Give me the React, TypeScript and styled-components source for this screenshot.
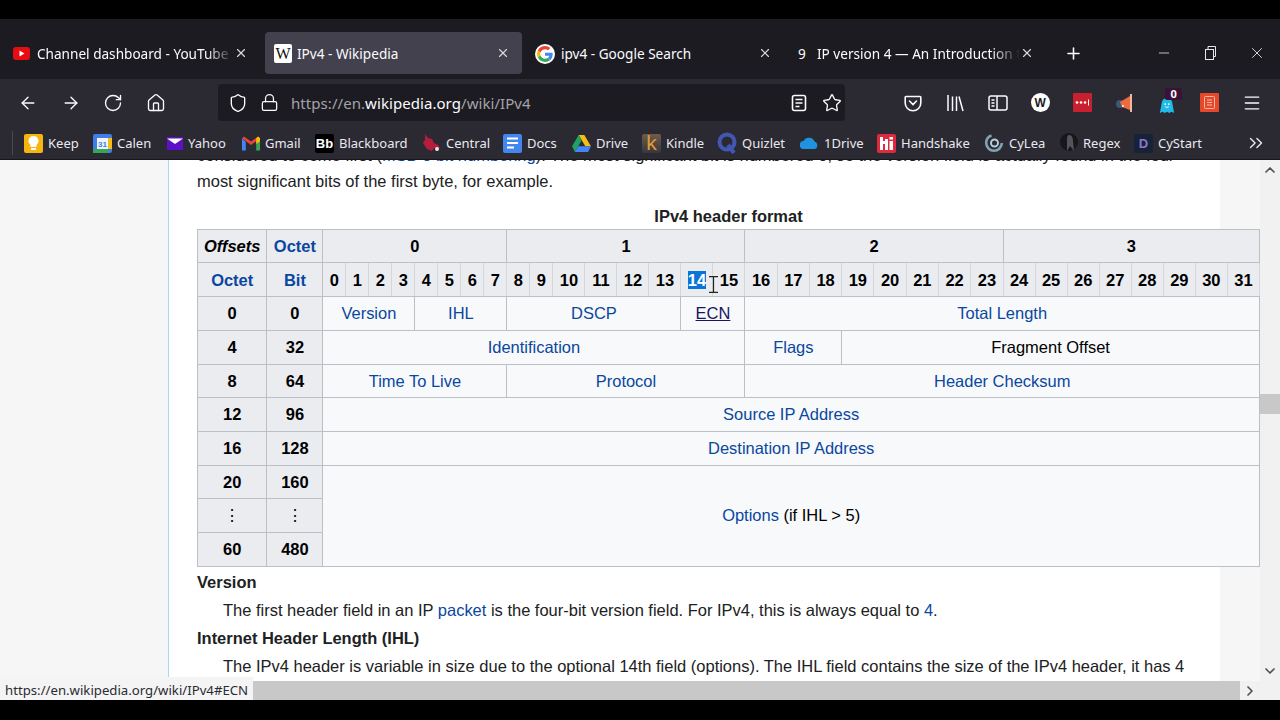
import React from 'react';
import styled, { createGlobalStyle } from 'styled-components';
import { ArrowLeft, ArrowRight, ChevronDown, ChevronRight, ChevronUp, ChevronsRight, Home, Lock, Menu, Minus, Plus, RotateCw, Shield, Star, X } from 'lucide-react';

const GlobalStyle = createGlobalStyle`
    html, body {
        margin: 0;
        padding: 0;
        background: #000;
    }
`;

const Screen = styled.div`
    width: 1280px;
    height: 720px;
    overflow: hidden;
    display: flex;
    flex-direction: column;
    background: #000;
    font-family: "Noto Sans", sans-serif;
`;

const BlackBand = styled.div<{ $h: number }>`
    height: ${p => p.$h}px;
    flex: none;
    background: #000;
`;

const TabBar = styled.div`
    height: 60px;
    flex: none;
    display: flex;
    align-items: center;
    padding: 8px 0 0 3px;
    box-sizing: border-box;
    background: #1c1b22;
    color: #fbfbfe;
`;

const TabStrip = styled.div`
    display: flex;
    gap: 5px;
`;

const Tab = styled.div<{ $active?: boolean }>`
    width: 257px;
    height: 42px;
    box-sizing: border-box;
    padding: 1px 12px 0 9px;
    display: flex;
    align-items: center;
    gap: 5px;
    border-radius: 4px;
    font-size: 13.6px;
    background: ${p => (p.$active ? '#42414d' : 'transparent')};
`;

const TabLabel = styled.span<{ $fade?: boolean }>`
    flex: 1;
    min-width: 0;
    white-space: nowrap;
    overflow: hidden;
    ${p => p.$fade && 'mask-image: linear-gradient(to right, #000 86%, transparent 100%);'}
`;

const TabNumber = styled.span`
    width: 14px;
`;

const TabClose = styled.span`
    display: flex;
    margin: -1px 0 0 -5px;
    color: #d8d8dc;
`;

const NewTab = styled.span`
    display: flex;
    margin-left: 18px;
`;

const WindowControls = styled.div`
    margin-left: auto;
    display: flex;
    align-items: center;
    gap: 30px;
    padding-right: 14px;
    color: #e8e8ea;
`;

const NavBar = styled.div`
    height: 46px;
    flex: none;
    box-sizing: border-box;
    padding-top: 1px;
    display: flex;
    align-items: center;
    background: #2b2a33;
    color: #fbfbfe;
`;

const NavButtons = styled.div`
    width: 218px;
    flex: none;
    box-sizing: border-box;
    padding-left: 18px;
    display: flex;
    gap: 22.5px;
`;

const UrlBar = styled.div`
    width: 627px;
    height: 37px;
    flex: none;
    box-sizing: border-box;
    padding: 0 1px 0 10px;
    display: flex;
    align-items: center;
    border-radius: 4px;
    background: #1c1b22;
`;

const UrlIcon = styled.span<{ $gap: number }>`
    display: flex;
    margin-right: ${p => p.$gap}px;
`;

const UrlText = styled.span`
    flex: 1;
    font-size: 15px;
    letter-spacing: 0.06px;
    color: #a4a3ab;
`;

const UrlHost = styled.span`
    color: #fbfbfe;
`;

const NavExtensions = styled.div`
    flex: 1;
    display: flex;
    align-items: center;
    gap: 18.38px;
    padding-left: 56px;
`;

const Extension = styled.span`
    position: relative;
    width: 24px;
    height: 24px;
    display: flex;
    align-items: center;
    justify-content: center;
`;

const GhostBadge = styled.span`
    position: absolute;
    top: -3px;
    right: -3px;
    width: 17px;
    height: 12px;
    border-radius: 2px;
    font-size: 11px;
    font-weight: 700;
    line-height: 12px;
    text-align: center;
    color: #fff;
    background: #3a1237;
`;

const BadgeW = styled.span`
    width: 19px;
    height: 19px;
    border-radius: 50%;
    display: flex;
    align-items: center;
    justify-content: center;
    font: 700 12px "Liberation Sans", sans-serif;
    color: #1c1b22;
    background: #fff;
`;

const BookmarkBar = styled.div`
    height: 35px;
    flex: none;
    display: flex;
    align-items: center;
    box-sizing: border-box;
    padding: 1px 13px 0 12px;
    background: #2b2a33;
    color: #e9e9ee;
    box-shadow: inset 0 -1px 0 #17161b;
`;

const BookmarkSeparator = styled.span`
    width: 1px;
    height: 24px;
    margin-right: 11px;
    background: #4a4953;
`;

const Bookmark = styled.span<{ $w: number }>`
    flex: none;
    width: ${p => p.$w}px;
    display: flex;
    align-items: center;
    gap: 5px;
    font-size: 13px;
    white-space: nowrap;
`;

const IconTile = styled.span<{ $bg: string; $fg?: string }>`
    width: 19px;
    height: 19px;
    flex: none;
    border-radius: 2px;
    display: flex;
    align-items: center;
    justify-content: center;
    font: 700 13px "Liberation Sans", sans-serif;
    color: ${p => p.$fg || '#fff'};
    background: ${p => p.$bg};
`;

const KindleTile = styled(IconTile)`
    font: 400 21px "Liberation Sans", sans-serif;
`;

const BookmarkOverflow = styled.span`
    margin-left: auto;
    display: flex;
`;

const Viewport = styled.div`
    flex: 1;
    min-height: 0;
    display: flex;
    overflow: hidden;
    position: relative;
    background: #f6f6f6;
    font-family: "Liberation Sans", Arial, sans-serif;
    font-size: 16.48px;
    line-height: 25.6px;
    color: #202122;
`;

const PageArea = styled.div`
    flex: 1;
    min-width: 0;
    padding-left: 168px;
`;

const Article = styled.div`
    display: flow-root;
    width: 1052px;
    height: 100%;
    box-sizing: border-box;
    padding: 0 0 0 28px;
    border-left: 1px solid #a7d7f9;
    background: #fff;
    white-space: nowrap;
`;

const Para = styled.p`
    margin: -17px 0 0;
`;

const Link = styled.a<{ $visited?: boolean }>`
    color: ${p => (p.$visited ? '#1b1464' : '#0a479f')};
    text-decoration: ${p => (p.$visited ? 'underline' : 'none')};
`;

const Caption = styled.div`
    width: 1063px;
    margin-top: 10px;
    margin-bottom: -1px;
    font-weight: 700;
    text-align: center;
`;

const HeaderTable = styled.table`
    width: 1062px;
    table-layout: fixed;
    border-collapse: collapse;
    color: #000;
    background: #f8f9fa;
`;

const Col = styled.col<{ $w: number }>`
    width: ${p => p.$w}px;
`;

const Row = styled.tr`
    height: 33.7px;
`;

const Head = styled.th<{ $italic?: boolean }>`
    padding: 1px 0 0;
    border: 1px solid #bcc0c5;
    font-weight: 700;
    font-style: ${p => (p.$italic ? 'italic' : 'normal')};
    text-align: center;
    background: #eaecf0;
`;

const BitHead = styled(Head)`
    border-color: #d4d7db;
    border-top-color: #bcc0c5;
    border-bottom-color: #bcc0c5;
`;

const SelectedBitHead = styled(BitHead)`
    position: relative;
`;

const Cell = styled.td`
    padding: 1px 0 0;
    border: 1px solid #bcc0c5;
    text-align: center;
`;

const Selected = styled.span`
    color: #fff;
    background: #0a74d8;
`;

const Dots = styled.span`
    font-weight: 400;
`;

const Cursor = styled.svg`
    position: absolute;
    top: 13px;
    right: -7px;
`;

const Term = styled.div`
    margin: 3px 0 0;
    font-weight: 700;
    line-height: 25px;
`;

const Definition = styled.div`
    margin: 3px 0 0 26px;
    line-height: 25px;
`;

const VerticalScroll = styled.div`
    width: 20px;
    flex: none;
    display: flex;
    flex-direction: column;
    align-items: center;
    background: #f1f1f1;
    color: #505050;
`;

const ScrollTrack = styled.div`
    flex: 1;
    width: 100%;
    padding-top: 214px;
    box-sizing: border-box;
`;

const ScrollThumb = styled.div`
    height: 20px;
    background: #c8c8c8;
`;

const ScrollArrow = styled.span`
    height: 20px;
    flex: none;
    display: flex;
    align-items: center;
    justify-content: center;
`;

const BottomScroll = styled.div`
    position: relative;
    height: 19px;
    flex: none;
    display: flex;
    background: #f1f1f1;
    color: #505050;
`;

const BottomThumb = styled.div`
    width: 1240px;
    flex: none;
    background: #c8c8c8;
`;

const BottomArrow = styled.span`
    width: 20px;
    display: flex;
    align-items: center;
    justify-content: center;
`;

const StatusPanel = styled.div`
    position: absolute;
    left: 0;
    bottom: 0;
    width: 253px;
    height: 23px;
    box-sizing: border-box;
    padding-left: 5px;
    font: 13.2px/26px "Noto Sans", sans-serif;
    color: #2b2a33;
    background: #f4f4f4;
    white-space: nowrap;
    overflow: hidden;
`;

const YouTubeSvg = styled.svg`
    margin: 0 2px 0 1px;
`;

const YouTubeIcon = () => (
    <YouTubeSvg width="17" height="13" viewBox="0 0 17 13">
        <rect width="17" height="13" rx="3" fill="#e60d12" />
        <path d="M6.5 3.5 L11.5 6.5 L6.5 9.5 Z" fill="#fff" />
    </YouTubeSvg>
);

const WikiTile = styled(IconTile)`
    width: 18px;
    font: 400 16px "Liberation Serif", serif;
`;

const GoogleSvg = styled.svg`
    margin: 0 1px 0 -1px;
`;

const GoogleIcon = () => (
    <GoogleSvg width="20" height="20" viewBox="-6 -6 60 60">
        <circle cx="24" cy="24" r="30" fill="#fff" />
        <path fill="#EA4335" d="M24 9.5c3.54 0 6.71 1.22 9.21 3.6l6.85-6.85C35.9 2.38 30.47 0 24 0 14.62 0 6.51 5.38 2.56 13.22l7.98 6.19C12.43 13.72 17.74 9.5 24 9.5z" />
        <path fill="#4285F4" d="M46.98 24.55c0-1.57-.15-3.09-.38-4.55H24v9.02h12.94c-.58 2.96-2.26 5.48-4.78 7.18l7.73 6c4.51-4.18 7.09-10.36 7.09-17.65z" />
        <path fill="#FBBC05" d="M10.53 28.59c-.48-1.45-.76-2.99-.76-4.59s.27-3.14.76-4.59l-7.98-6.19C.92 16.46 0 20.12 0 24c0 3.88.92 7.54 2.56 10.78l7.97-6.19z" />
        <path fill="#34A853" d="M24 48c6.48 0 11.93-2.13 15.89-5.81l-7.73-6c-2.15 1.45-4.92 2.3-8.16 2.3-6.26 0-11.57-4.22-13.47-9.91l-7.98 6.19C6.51 42.62 14.62 48 24 48z" />
    </GoogleSvg>
);

const RestoreIcon = () => (
    <svg width="16" height="16" viewBox="0 0 16 16" fill="none" stroke="currentColor" strokeWidth="1">
        <rect x="3.5" y="4.5" width="8" height="10" />
        <path d="M6 4.500V1.500h7.500v10h-2" />
    </svg>
);

const ReaderIcon = () => (
    <svg width="18" height="18" viewBox="0 0 18 18" fill="none" stroke="#fbfbfe" strokeWidth="1.6">
        <rect x="2.5" y="1.5" width="13" height="15" rx="2" />
        <path d="M5.5 5.5h7M5.5 9h7M5.5 12.5h4" />
    </svg>
);

const PocketIcon = () => (
    <svg width="18" height="18" viewBox="0 0 18 18" fill="none" stroke="#fbfbfe" strokeWidth="1.6">
        <path d="M2 2.500h14a.8.8 0 0 1 .8.8V9a7.8 7.8 0 0 1-15.6 0V3.300a.8.8 0 0 1 .8-.8z" />
        <path d="M5.5 7L9 10.500 12.500 7" strokeLinecap="round" />
    </svg>
);

const LibraryIcon = () => (
    <svg width="20" height="20" viewBox="0 0 20 20" fill="none" stroke="#fbfbfe" strokeWidth="1.5">
        <path d="M3 2v16M7.5 3.5V18M11.5 3.5V18M14 3.5L18 18" />
    </svg>
);

const SidebarIcon = () => (
    <svg width="20" height="18" viewBox="0 0 20 18" fill="none" stroke="#fbfbfe" strokeWidth="1.5">
        <rect x="1" y="2" width="18" height="14" rx="2" />
        <path d="M9 2v14M3.5 6h3M3.5 9h3M3.5 12h3" />
    </svg>
);

const LastPassIcon = () => (
    <svg width="19" height="19" viewBox="0 0 19 19">
        <rect width="19" height="19" rx="1" fill="#c8202f" />
        <circle cx="4" cy="9.5" r="1.3" fill="#fff" />
        <circle cx="8" cy="9.5" r="1.3" fill="#fff" />
        <circle cx="12" cy="9.5" r="1.3" fill="#fff" />
        <rect x="15" y="6.5" width="1" height="6" fill="#fff" />
    </svg>
);

const MegaphoneIcon = () => (
    <svg width="20" height="20" viewBox="0 0 20 20">
        <circle cx="5" cy="11" r="4" fill="#3c5a76" />
        <path d="M5 9l10-6v14l-8-3z" fill="#ec6b3f" />
        <rect x="15" y="1" width="2" height="18" fill="#f0b8a0" />
        <circle cx="8" cy="13" r="1" fill="#fff" />
    </svg>
);

const GhostSvg = styled.svg`
    margin-top: 5px;
`;

const GhostIcon = () => (
    <GhostSvg width="16" height="18" viewBox="0 0 18 20">
        <path d="M3 8a6 6 0 0 1 12 0l2 11-3-1.500-2.500 1.500L9 17.500 6.500 19 4 17.500 1 19z" fill="#22bbe8" />
        <circle cx="7" cy="9" r="1" fill="#fff" />
        <circle cx="11" cy="9" r="1" fill="#fff" />
        <path d="M7 12q2 1.500 4 0" stroke="#fff" fill="none" />
    </GhostSvg>
);

const ReaderExtensionIcon = () => (
    <svg width="19" height="19" viewBox="0 0 19 19">
        <rect width="19" height="19" rx="1" fill="#e5492a" />
        <rect x="4.500" y="3.500" width="10" height="12" rx="1" fill="none" stroke="#f8b9a8" />
        <path d="M7 7h5M7 9.500h5M7 12h5" stroke="#f8b9a8" />
    </svg>
);

const KeepIcon = () => (
    <IconTile $bg="#f6b60f">
        <svg width="11" height="14" viewBox="0 0 11 14">
            <path d="M5.500 0a5 5 0 0 1 3 9v2h-6V9a5 5 0 0 1 3-9z" fill="#fff" />
            <rect x="3" y="12" width="5" height="2" fill="#fff" />
        </svg>
    </IconTile>
);

const CalendarIcon = () => (
    <svg width="19" height="19" viewBox="0 0 19 19">
        <rect width="19" height="19" rx="2" fill="#3f7ee8" />
        <rect x="4" y="4" width="11" height="11" fill="#eef3fc" />
        <rect x="15" y="4" width="4" height="11" fill="#f6bd18" />
        <rect y="15" width="15" height="4" fill="#35a853" />
        <text x="9.500" y="13" fontSize="8" fontWeight="700" textAnchor="middle" fill="#3f7ee8" fontFamily="Liberation Sans">31</text>
    </svg>
);

const YahooIcon = () => (
    <svg width="18" height="13" viewBox="0 0 18 13">
        <rect x="2" width="16" height="13" fill="#5c10c8" />
        <path d="M2 1.500h16L10 7z" fill="#fff" />
    </svg>
);

const GmailIcon = () => (
    <svg width="18" height="15" viewBox="0 0 19 15">
        <path d="M0 2v13h4V6z" fill="#4285f4" />
        <path d="M15 6v9h4V2z" fill="#34a853" />
        <path d="M0 2l9.500 7L19 2l-2-2-7.500 5.500L2 0z" fill="#ea4335" />
        <path d="M15 2l2-2 2 2v3l-4 3z" fill="#fbbc05" />
    </svg>
);

const CentralIcon = () => (
    <svg width="19" height="20" viewBox="0 0 19 20">
        <path d="M3 1l3 4 4 1 2 4 4 2 2 3-3 1-3-1-2 3-5-2-4-6 2-3z" fill="#b51d3c" />
        <circle cx="15" cy="16" r="2" fill="#e8e8e8" />
    </svg>
);

const DocsIcon = () => (
    <IconTile $bg="#4486f0">
        <svg width="13" height="12" viewBox="0 0 13 12">
            <path d="M1 1.500h11M1 6h11M1 10.500h7" stroke="#fff" strokeWidth="2" />
        </svg>
    </IconTile>
);

const DriveIcon = () => (
    <svg width="19" height="17" viewBox="0 0 20 18">
        <path d="M7 0h6l7 12h-6z" fill="#f6bd18" />
        <path d="M7 0l3 6-7 12-3-6z" fill="#1ea362" />
        <path d="M6.500 12H20l-3 6H3z" fill="#4285f4" />
    </svg>
);

const QuizletIcon = () => (
    <svg width="20" height="22" viewBox="0 0 20 22" fill="none">
        <circle cx="10" cy="10" r="7.500" stroke="#4257b2" strokeWidth="4" />
        <path d="M11 13l6 8" stroke="#4257b2" strokeWidth="4" />
    </svg>
);

const OneDriveIcon = () => (
    <svg width="19" height="12" viewBox="0 0 19 12">
        <path d="M4 12a4 4 0 0 1-.5-8A6 6 0 0 1 14.500 4.500 4 4 0 0 1 15 12z" fill="#1f93e0" />
    </svg>
);

const HandshakeIcon = () => (
    <IconTile $bg="#de2a3c">
        <svg width="13" height="13" viewBox="0 0 13 13">
            <path d="M0 0h3v4h2V2h3v11H5V7H3v6H0zM9.500 4H13v9H9.500zM9.500 0H13v2.500H9.500z" fill="#fff" />
        </svg>
    </IconTile>
);

const CyLeaIcon = () => (
    <svg width="20" height="20" viewBox="0 0 20 20" fill="none">
        <circle cx="10" cy="10" r="7.800" stroke="#7fa3b3" strokeWidth="2.600" strokeDasharray="34 15" />
        <circle cx="10.500" cy="10" r="3.500" stroke="#b7ccd6" strokeWidth="2" />
    </svg>
);

const RegexIcon = () => (
    <svg width="18" height="22" viewBox="0 0 18 22">
        <circle cx="9" cy="10" r="9" fill="#17161a" />
        <path d="M9 3c3 0 4 3 4 6l1 10-4-5-3 5V9c0-3 0-6 2-6z" fill="#55545a" />
    </svg>
);

const bookmarks: { name: string; w: number; icon: React.ReactNode }[] = [
    { name: 'Keep', w: 69, icon: <KeepIcon /> },
    { name: 'Calen', w: 72, icon: <CalendarIcon /> },
    { name: 'Yahoo', w: 77, icon: <YahooIcon /> },
    { name: 'Gmail', w: 73, icon: <GmailIcon /> },
    { name: 'Blackboard', w: 107, icon: <IconTile $bg="#000">Bb</IconTile> },
    { name: 'Central', w: 81, icon: <CentralIcon /> },
    { name: 'Docs', w: 69, icon: <DocsIcon /> },
    { name: 'Drive', w: 70, icon: <DriveIcon /> },
    { name: 'Kindle', w: 75, icon: <KindleTile $bg="linear-gradient(#6e5c48, #37373c)" $fg="#e09a3c">k</KindleTile> },
    { name: 'Quizlet', w: 83, icon: <QuizletIcon /> },
    { name: '1Drive', w: 77, icon: <OneDriveIcon /> },
    { name: 'Handshake', w: 107, icon: <HandshakeIcon /> },
    { name: 'CyLea', w: 76, icon: <CyLeaIcon /> },
    { name: 'Regex', w: 74, icon: <RegexIcon /> },
    { name: 'CyStart', w: 80, icon: <IconTile $bg="#152238" $fg="#8a78c8">D</IconTile> },
];

const colWidths = [
    69.4, 56,
    ...Array(10).fill(23),
    ...Array(6).fill(32),
    ...Array(8).fill(32.25),
    ...Array(8).fill(32.05),
];

const bits = Array.from({ length: 32 }, (_, i) => i);

const renderBit = (bit: number) => {
    if (bit === 14) {
        return (
            <SelectedBitHead key={bit}>
                <Selected>14</Selected>
                <Cursor width="11" height="17" viewBox="0 0 11 17" fill="none" stroke="#222" strokeWidth="1.2">
                    <path d="M1 .6h9M5.500 .6v15.800M1 16.400h9" />
                </Cursor>
            </SelectedBitHead>
        );
    }
    return <BitHead key={bit}>{bit}</BitHead>;
};

const App = () => {
    return (
        <Screen>
            <GlobalStyle />
            <BlackBand $h={19} />
            <TabBar>
                <TabStrip>
                    <Tab>
                        <YouTubeIcon />
                        <TabLabel $fade>Channel dashboard - YouTube Studio</TabLabel>
                        <TabClose><X size={14} /></TabClose>
                    </Tab>
                    <Tab $active>
                        <WikiTile $bg="#fff" $fg="#111">W</WikiTile>
                        <TabLabel>IPv4 - Wikipedia</TabLabel>
                        <TabClose><X size={14} /></TabClose>
                    </Tab>
                    <Tab>
                        <GoogleIcon />
                        <TabLabel>ipv4 - Google Search</TabLabel>
                        <TabClose><X size={14} /></TabClose>
                    </Tab>
                    <Tab>
                        <TabNumber>9</TabNumber>
                        <TabLabel $fade>IP version 4 — An Introduction to IPv4</TabLabel>
                        <TabClose><X size={14} /></TabClose>
                    </Tab>
                </TabStrip>
                <NewTab><Plus size={19} strokeWidth={2} /></NewTab>
                <WindowControls>
                    <Minus size={16} strokeWidth={1.2} />
                    <RestoreIcon />
                    <X size={18} strokeWidth={1.2} />
                </WindowControls>
            </TabBar>
            <NavBar>
                <NavButtons>
                    <ArrowLeft size={20} strokeWidth={1.6} />
                    <ArrowRight size={20} strokeWidth={1.6} />
                    <RotateCw size={20} strokeWidth={1.6} />
                    <Home size={20} strokeWidth={1.6} />
                </NavButtons>
                <UrlBar>
                    <UrlIcon $gap={12}><Shield size={20} strokeWidth={1.6} /></UrlIcon>
                    <UrlIcon $gap={12}><Lock size={19} strokeWidth={1.6} /></UrlIcon>
                    <UrlText>https://en.<UrlHost>wikipedia.org</UrlHost>/wiki/IPv4</UrlText>
                    <UrlIcon $gap={14}><ReaderIcon /></UrlIcon>
                    <UrlIcon $gap={2}><Star size={20} strokeWidth={1.6} /></UrlIcon>
                </UrlBar>
                <NavExtensions>
                    <Extension><PocketIcon /></Extension>
                    <Extension><LibraryIcon /></Extension>
                    <Extension><SidebarIcon /></Extension>
                    <Extension><BadgeW>W</BadgeW></Extension>
                    <Extension><LastPassIcon /></Extension>
                    <Extension><MegaphoneIcon /></Extension>
                    <Extension><GhostIcon /><GhostBadge>0</GhostBadge></Extension>
                    <Extension><ReaderExtensionIcon /></Extension>
                    <Extension><Menu size={20} strokeWidth={1.6} /></Extension>
                </NavExtensions>
            </NavBar>
            <BookmarkBar>
                <BookmarkSeparator />
                {bookmarks.map(b => (
                    <Bookmark key={b.name} $w={b.w}>{b.icon}{b.name}</Bookmark>
                ))}
                <BookmarkOverflow><ChevronsRight size={22} strokeWidth={1.5} /></BookmarkOverflow>
            </BookmarkBar>
            <Viewport>
                <PageArea>
                    <Article>
                        <Para>
                            considered to come first (<Link>MSB 0 bit numbering</Link>). The most significant bit is numbered 0, so the version field is actually found in the four<br />
                            most significant bits of the first byte, for example.
                        </Para>
                        <Caption>IPv4 header format</Caption>
                        <HeaderTable>
                            <colgroup>
                                {colWidths.map((w, i) => <Col key={i} $w={w} />)}
                            </colgroup>
                            <tbody>
                                <Row>
                                    <Head $italic>Offsets</Head>
                                    <Head><Link>Octet</Link></Head>
                                    <Head colSpan={8}>0</Head>
                                    <Head colSpan={8}>1</Head>
                                    <Head colSpan={8}>2</Head>
                                    <Head colSpan={8}>3</Head>
                                </Row>
                                <Row>
                                    <Head><Link>Octet</Link></Head>
                                    <Head><Link>Bit</Link></Head>
                                    {bits.map(renderBit)}
                                </Row>
                                <Row>
                                    <Head>0</Head>
                                    <Head>0</Head>
                                    <Cell colSpan={4}><Link>Version</Link></Cell>
                                    <Cell colSpan={4}><Link>IHL</Link></Cell>
                                    <Cell colSpan={6}><Link>DSCP</Link></Cell>
                                    <Cell colSpan={2}><Link $visited>ECN</Link></Cell>
                                    <Cell colSpan={16}><Link>Total Length</Link></Cell>
                                </Row>
                                <Row>
                                    <Head>4</Head>
                                    <Head>32</Head>
                                    <Cell colSpan={16}><Link>Identification</Link></Cell>
                                    <Cell colSpan={3}><Link>Flags</Link></Cell>
                                    <Cell colSpan={13}>Fragment Offset</Cell>
                                </Row>
                                <Row>
                                    <Head>8</Head>
                                    <Head>64</Head>
                                    <Cell colSpan={8}><Link>Time To Live</Link></Cell>
                                    <Cell colSpan={8}><Link>Protocol</Link></Cell>
                                    <Cell colSpan={16}><Link>Header Checksum</Link></Cell>
                                </Row>
                                <Row>
                                    <Head>12</Head>
                                    <Head>96</Head>
                                    <Cell colSpan={32}><Link>Source IP Address</Link></Cell>
                                </Row>
                                <Row>
                                    <Head>16</Head>
                                    <Head>128</Head>
                                    <Cell colSpan={32}><Link>Destination IP Address</Link></Cell>
                                </Row>
                                <Row>
                                    <Head>20</Head>
                                    <Head>160</Head>
                                    <Cell colSpan={32} rowSpan={3}><Link>Options</Link> (if IHL &gt; 5)</Cell>
                                </Row>
                                <Row>
                                    <Head><Dots>⋮</Dots></Head>
                                    <Head><Dots>⋮</Dots></Head>
                                </Row>
                                <Row>
                                    <Head>60</Head>
                                    <Head>480</Head>
                                </Row>
                            </tbody>
                        </HeaderTable>
                        <Term>Version</Term>
                        <Definition>The first header field in an IP <Link>packet</Link> is the four-bit version field. For IPv4, this is always equal to <Link>4</Link>.</Definition>
                        <Term>Internet Header Length (IHL)</Term>
                        <Definition>The IPv4 header is variable in size due to the optional 14th field (options). The IHL field contains the size of the IPv4 header, it has 4</Definition>
                    </Article>
                </PageArea>
                <VerticalScroll>
                    <ScrollArrow><ChevronUp size={16} strokeWidth={2.5} /></ScrollArrow>
                    <ScrollTrack><ScrollThumb /></ScrollTrack>
                    <ScrollArrow><ChevronDown size={16} strokeWidth={2.5} /></ScrollArrow>
                </VerticalScroll>
            </Viewport>
            <BottomScroll>
                <BottomThumb />
                <BottomArrow><ChevronRight size={16} strokeWidth={2.5} /></BottomArrow>
                <StatusPanel>https://en.wikipedia.org/wiki/IPv4#ECN</StatusPanel>
            </BottomScroll>
            <BlackBand $h={20} />
        </Screen>
    );
};

export default App;
